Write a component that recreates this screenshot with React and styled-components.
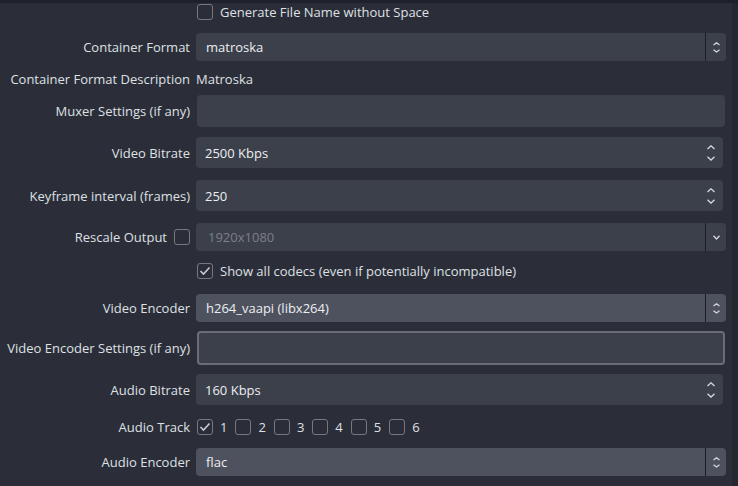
import React from "react";
import styled, { createGlobalStyle } from "styled-components";

const Global = createGlobalStyle`
  html, body { margin: 0; padding: 0; background: #2b2e38; }
  body { font-family: "Open Sans", "Noto Sans", sans-serif; font-size: 13px; color: #dfe0e5; }
  * { box-sizing: border-box; }
`;

const Frame = styled.div`
  width: 738px;
  height: 486px;
  display: flex;
  flex-direction: column;
  background: #2b2e38;
  overflow: hidden;
`;

const TopStrip = styled.div`
  height: 3px;
  flex: none;
  background: #1f212a;
`;

const Body = styled.div`
  flex: 1;
  display: flex;
`;

const Form = styled.div`
  flex: 1;
  display: flex;
  flex-direction: column;
  padding-right: 6px;
`;

const SideStrip = styled.div`
  width: 6px;
  flex: none;
  background: #262831;
`;

const Row = styled.div`
  display: grid;
  grid-template-columns: 190px 1fr;
  column-gap: 6px;
  align-items: center;
  height: ${(p) => p.$h}px;
  margin-top: ${(p) => p.$mt}px;
`;

const Label = styled.div`
  display: flex;
  align-items: center;
  justify-content: flex-end;
  gap: 7px;
  white-space: nowrap;
  color: #dfe0e5;
  line-height: 16px;
`;

const Field = styled.div`
  display: flex;
  align-items: center;
  height: 100%;
  min-width: 0;
  padding-right: ${(p) => p.$pr || 0}px;
  padding-left: ${(p) => p.$pl || 0}px;
`;

const Combo = styled.div`
  flex: 1;
  height: 100%;
  display: flex;
  border-radius: 4px;
  background: ${(p) => (p.$hover ? "#4e525e" : "#3c404b")};
  color: ${(p) => (p.$disabled ? "#7c7f88" : "#eceef2")};
  overflow: hidden;
`;

const ComboText = styled.div`
  flex: 1;
  display: flex;
  align-items: center;
  padding-left: ${(p) => p.$pl || 10}px;
  white-space: nowrap;
`;

const ComboArrow = styled.div`
  width: 21px;
  flex: none;
  display: flex;
  flex-direction: column;
  align-items: center;
  justify-content: center;
  gap: ${(p) => p.$gap || 3}px;
  border-left: 1px solid #1c1e25;
  color: #d6d7dc;
`;

const Spin = styled.div`
  flex: 1;
  height: 100%;
  display: flex;
  border-radius: 4px;
  background: #3c404b;
  color: #eceef2;
`;

const SpinArrows = styled.div`
  width: 24px;
  flex: none;
  display: flex;
  flex-direction: column;
  align-items: center;
  justify-content: center;
  gap: 6px;
  color: #d6d7dc;
`;

const TextInput = styled.div`
  flex: 1;
  height: 100%;
  border-radius: 4px;
  background: #3c404b;
  border: ${(p) => (p.$focus ? "2px solid #6a6d78" : "none")};
`;

const Box = styled.span`
  width: 16px;
  height: 16px;
  flex: none;
  border: 1.5px solid #75787f;
  border-radius: 3px;
  display: inline-flex;
  align-items: center;
  justify-content: center;
  color: #c9cbd1;
`;

const Check = styled.label`
  display: inline-flex;
  align-items: center;
  gap: 7px;
  color: #dfe0e5;
  white-space: nowrap;
  line-height: 16px;
`;

const TrackList = styled.div`
  display: flex;
  align-items: center;
  gap: 8px;
`;

const Plain = styled.div`
  color: #dfe0e5;
  padding-left: 0px;
`;

const Up = ({ w = 8, h = 4 }) => (
  <svg width={w} height={h + 1} viewBox={`0 0 ${w} ${h + 1}`}>
    <polyline points={`0.5,${h} ${w / 2},0.8 ${w - 0.5},${h}`} fill="none" stroke="currentColor" strokeWidth="1.3" />
  </svg>
);
const Down = ({ w = 8, h = 4 }) => (
  <svg width={w} height={h + 1} viewBox={`0 0 ${w} ${h + 1}`}>
    <polyline points={`0.5,0.8 ${w / 2},${h} ${w - 0.5},0.8`} fill="none" stroke="currentColor" strokeWidth="1.3" />
  </svg>
);

const Tick = () => (
  <svg width="12" height="10" viewBox="0 0 12 10">
    <polyline points="1.5,5 4.5,8 10.5,1.5" fill="none" stroke="currentColor" strokeWidth="1.6" />
  </svg>
);

const CheckBox = ({ checked }) => <Box>{checked ? <Tick /> : null}</Box>;

const ComboBox = ({ value, hover, single, disabled }) => (
  <Combo $hover={hover} $disabled={disabled}>
    <ComboText $pl={disabled ? 12 : 10}>{value}</ComboText>
    {single ? (
      <ComboArrow>
        <Down w={7} h={4} />
      </ComboArrow>
    ) : (
      <ComboArrow $gap={3}>
        <Up w={7} h={3} />
        <Down w={7} h={3} />
      </ComboArrow>
    )}
  </Combo>
);

const SpinBox = ({ value }) => (
  <Spin>
    <ComboText $pl={9}>{value}</ComboText>
    <SpinArrows>
      <Up />
      <Down />
    </SpinArrows>
  </Spin>
);

export default function App() {
  return (
    <Frame>
      <Global />
      <TopStrip />
      <Body>
        <Form>
          <Row $h={16} $mt={1}>
            <span />
            <Field $pl={1}>
              <Check>
                <CheckBox />
                Generate File Name without Space
              </Check>
            </Field>
          </Row>
          <Row $h={28} $mt={13}>
            <Label>Container Format</Label>
            <Field>
              <ComboBox value="matroska" />
            </Field>
          </Row>
          <Row $h={18} $mt={9}>
            <Label>Container Format Description</Label>
            <Plain>Matroska</Plain>
          </Row>
          <Row $h={32} $mt={7}>
            <Label>Muxer Settings (if any)</Label>
            <Field $pl={1} $pr={1}>
              <TextInput />
            </Field>
          </Row>
          <Row $h={31} $mt={10}>
            <Label>Video Bitrate</Label>
            <Field $pr={3}>
              <SpinBox value="2500 Kbps" />
            </Field>
          </Row>
          <Row $h={31} $mt={12}>
            <Label>Keyframe interval (frames)</Label>
            <Field $pr={3}>
              <SpinBox value="250" />
            </Field>
          </Row>
          <Row $h={28} $mt={12}>
            <Label>
              Rescale Output
              <CheckBox />
            </Label>
            <Field>
              <ComboBox value="1920x1080" single disabled />
            </Field>
          </Row>
          <Row $h={16} $mt={12}>
            <span />
            <Field $pl={1}>
              <Check>
                <CheckBox checked />
                Show all codecs (even if potentially incompatible)
              </Check>
            </Field>
          </Row>
          <Row $h={28} $mt={15}>
            <Label>Video Encoder</Label>
            <Field>
              <ComboBox value="h264_vaapi (libx264)" hover />
            </Field>
          </Row>
          <Row $h={34} $mt={9}>
            <Label>Video Encoder Settings (if any)</Label>
            <Field $pl={1} $pr={1}>
              <TextInput $focus />
            </Field>
          </Row>
          <Row $h={31} $mt={9}>
            <Label>Audio Bitrate</Label>
            <Field $pr={3}>
              <SpinBox value="160 Kbps" />
            </Field>
          </Row>
          <Row $h={16} $mt={14}>
            <Label>Audio Track</Label>
            <Field $pl={1}>
              <TrackList>
                {[1, 2, 3, 4, 5, 6].map((n) => (
                  <Check key={n}>
                    <CheckBox checked={n === 1} />
                    {n}
                  </Check>
                ))}
              </TrackList>
            </Field>
          </Row>
          <Row $h={28} $mt={13}>
            <Label>Audio Encoder</Label>
            <Field>
              <ComboBox value="flac" hover />
            </Field>
          </Row>
        </Form>
        <SideStrip />
      </Body>
    </Frame>
  );
}
